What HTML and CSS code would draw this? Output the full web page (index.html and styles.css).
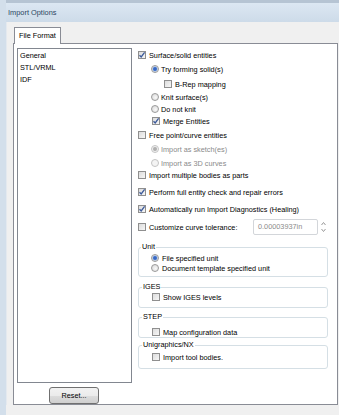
FILE: index.html
```html
<!DOCTYPE html>
<html>
<head>
<meta charset="utf-8">
<link rel="stylesheet" href="styles.css">
</head>
<body>
<div class="win">
  <div class="title">Import Options</div>
  <div class="client">
    <div class="tabs"><div class="tab">File Format</div></div>
    <div class="panel">
      <div class="left">
        <div class="list">
          <div class="item">General</div>
          <div class="item">STL/VRML</div>
          <div class="item">IDF</div>
        </div>
        <button class="reset">Reset...</button>
      </div>
      <div class="right">
        <div class="row r1"><span class="cb on"><svg viewBox="0 0 8 8"><path d="M1.5 4.2 L3.2 6 L6.6 1.4" /></svg></span><span>Surface/solid entities</span></div>
        <div class="row in1 g2"><span class="rd on"></span><span>Try forming solid(s)</span></div>
        <div class="row in2 g3"><span class="cb"></span><span>B-Rep mapping</span></div>
        <div class="row in1 g1"><span class="rd"></span><span>Knit surface(s)</span></div>
        <div class="row in1"><span class="rd"></span><span>Do not knit</span></div>
        <div class="row in1c"><span class="cb on"><svg viewBox="0 0 8 8"><path d="M1.5 4.2 L3.2 6 L6.6 1.4" /></svg></span><span>Merge Entities</span></div>
        <div class="row g2"><span class="cb"></span><span>Free point/curve entities</span></div>
        <div class="row in1 g2 dis"><span class="rd on"></span><span>Import as sketch(es)</span></div>
        <div class="row in1 g2 dis"><span class="rd"></span><span>Import as 3D curves</span></div>
        <div class="row"><span class="cb"></span><span>Import multiple bodies as parts</span></div>
        <div class="row g5"><span class="cb on"><svg viewBox="0 0 8 8"><path d="M1.5 4.2 L3.2 6 L6.6 1.4" /></svg></span><span>Perform full entity check and repair errors</span></div>
        <div class="row g5"><span class="cb on"><svg viewBox="0 0 8 8"><path d="M1.5 4.2 L3.2 6 L6.6 1.4" /></svg></span><span>Automatically run Import Diagnostics (Healing)</span></div>
        <div class="row tall g4"><span class="cb"></span><span class="tol-label">Customize curve tolerance:</span><span class="field">0.00003937in</span><span class="spin"><svg viewBox="0 0 7 16"><path d="M1.5 6 L3.5 3.5 L5.5 6" /><path d="M1.5 10 L3.5 12.5 L5.5 10" /></svg></span></div>

        <fieldset class="grp unit">
          <legend>Unit</legend>
          <div class="row sm"><span class="rd on"></span><span>File specified unit</span></div>
          <div class="row sm"><span class="rd"></span><span>Document template specified unit</span></div>
        </fieldset>
        <fieldset class="grp iges">
          <legend>IGES</legend>
          <div class="row sm"><span class="cb"></span><span>Show IGES levels</span></div>
        </fieldset>
        <fieldset class="grp step">
          <legend>STEP</legend>
          <div class="row sm"><span class="cb"></span><span>Map configuration data</span></div>
        </fieldset>
        <fieldset class="grp ug">
          <legend>Unigraphics/NX</legend>
          <div class="row sm"><span class="cb"></span><span>Import tool bodies.</span></div>
        </fieldset>
      </div>
    </div>
  </div>
</div>
</body>
</html>
```
FILE: styles.css
```css
html, body {
  margin: 0;
  padding: 0;
}
body {
  width: 339px;
  height: 415px;
  overflow: hidden;
  background: #f0f0f0;
  font-family: "Liberation Sans", Arial, sans-serif;
  font-size: 7.3px;
  color: #000;
}
.win {
  width: 339px;
  height: 415px;
  border-left: 6px solid #d3dfeb;
  box-sizing: border-box;
  background: #f0f0f0;
}
.title {
  height: 19px;
  border-top: 3px solid #b6c4d3;
  background: linear-gradient(#dce7f2, #cddbe9);
  color: #2b4560;
  padding-left: 2px;
  line-height: 20px;
  font-size: 7.4px;
}
.client {
  padding: 5px 1px 0 6px;
  border-left: 1px solid #e4e9ef;
}
.tabs {
  display: flex;
  height: 16px;
}
.tab {
  margin-left: 1px;
  width: 47px;
  height: 17px;
  box-sizing: border-box;
  border: 1px solid #898c95;
  border-bottom: none;
  background: #fff;
  line-height: 16px;
  padding-left: 4px;
  position: relative;
  z-index: 1;
}
.panel {
  display: flex;
  height: 362px;
  border: 1px solid #898c95;
  background: #fff;
  padding: 4px 0 0 3px;
  box-sizing: border-box;
}
.left {
  display: flex;
  flex-direction: column;
  width: 115px;
}
.list {
  height: 336px;
  border: 1px solid #828790;
  box-sizing: border-box;
  padding-left: 2px;
}
.item {
  height: 12px;
  line-height: 12px;
}
.item:first-child {
  margin-top: 1px;
}
.reset {
  margin: 4px 0 0 32px;
  width: 50px;
  height: 17px;
  border: 1px solid #707070;
  border-radius: 3px;
  background: linear-gradient(#f2f2f2 0%, #ebebeb 50%, #dddddd 51%, #cfcfcf 100%);
  font: inherit;
  padding: 0;
  color: #000;
}
.right {
  display: flex;
  flex-direction: column;
  margin-left: 4px;
  margin-top: 1px;
  width: 194px;
}
.row {
  display: flex;
  align-items: center;
  height: 12px;
  padding-left: 2px;
  gap: 3px;
  white-space: nowrap;
}
.row.in1 { padding-left: 15px; gap: 2px; }
.row.in1c { padding-left: 16px; }
.row.in2 { padding-left: 28px; }
.g1 { margin-top: 1px; }
.g2 { margin-top: 2px; }
.g3 { margin-top: 3px; }
.g4 { margin-top: 4px; }
.g5 { margin-top: 5px; }
.row.tall { height: 16px; }
.row.sm { height: 10px; padding-left: 0; }
.dis { color: #8a8a8a; }

.cb {
  width: 8px;
  height: 8px;
  box-sizing: border-box;
  border: 1px solid #8f8f8f;
  background: linear-gradient(135deg, #dcdcdc, #f6f6f6);
  display: inline-flex;
  flex: none;
}
.cb svg {
  width: 8px;
  height: 8px;
  margin: -1px;
}
.cb svg path {
  fill: none;
  stroke: #3c5a9a;
  stroke-width: 1.3;
}
.rd {
  width: 8px;
  height: 8px;
  box-sizing: border-box;
  border-radius: 50%;
  border: 1px solid #9a9a9a;
  background: radial-gradient(circle at 60% 60%, #f8f8f8, #d6d6d6);
  flex: none;
}
.rd.on {
  background: radial-gradient(circle, #2a58b8 0, #4a7ad0 1.6px, #c8d4e6 2.6px, #eeeeee 3.4px);
}
.dis .rd {
  border-color: #c4c4c4;
  background: #f4f4f4;
}
.dis .rd.on {
  background: radial-gradient(circle, #a8a8a8 0, #b8b8b8 1.6px, #f4f4f4 2.6px);
}
.tol-label {
  width: 101px;
}
.field {
  width: 65px;
  height: 16px;
  box-sizing: border-box;
  border: 1px solid #d3d6da;
  border-radius: 2px;
  color: #8a8a8a;
  line-height: 14px;
  padding-left: 4px;
}
.spin {
  width: 7px;
  height: 16px;
  margin-left: -1px;
}
.spin svg {
  width: 7px;
  height: 16px;
  display: block;
}
.spin path {
  fill: none;
  stroke: #9a9a9a;
  stroke-width: 1;
}
.grp {
  margin: 0 0 0 2px;
  width: 190px;
  box-sizing: border-box;
  border: 1px solid #d5dfe5;
  border-radius: 3px;
  padding: 0 0 0 12px;
  min-width: 0;
}
.grp legend {
  padding: 0 1px;
  margin-left: -10px;
  height: 10px;
  line-height: 10px;
}
.unit { margin-top: 7px; padding-top: 1px; padding-bottom: 3px; }
.iges { margin-top: 5px; padding-left: 13px; padding-bottom: 5px; }
.step { margin-top: 4px; padding-left: 13px; padding-top: 5px; padding-bottom: 0; }
.ug { margin-top: 2px; padding-left: 13px; padding-top: 2px; padding-bottom: 6px; }
```
